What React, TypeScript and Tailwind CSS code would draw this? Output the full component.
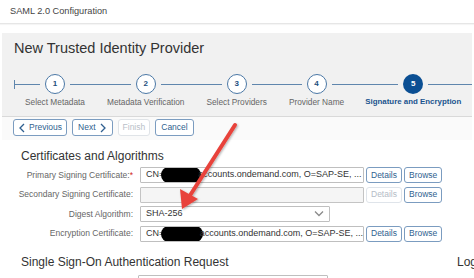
import React from "react";

type Step = { n: number; label: string; active?: boolean };

const steps: Step[] = [
  { n: 1, label: "Select Metadata" },
  { n: 2, label: "Metadata Verification" },
  { n: 3, label: "Select Providers" },
  { n: 4, label: "Provider Name" },
  { n: 5, label: "Signature and Encryption", active: true },
];

function Chevron({ dir }: { dir: "left" | "right" | "down" }) {
  const d =
    dir === "left" ? "M6 1 L2 5 L6 9" : dir === "right" ? "M2 1 L6 5 L2 9" : "M1 2.5 L5 6.5 L9 2.5";
  return (
    <svg width={dir === "down" ? 10 : 8} height="10" viewBox={dir === "down" ? "0 0 10 10" : "0 0 8 10"} className="shrink-0">
      <path d={d} fill="none" stroke="currentColor" strokeWidth="1.3" />
    </svg>
  );
}

function SmallButton({ children, disabled }: { children: React.ReactNode; disabled?: boolean }) {
  return (
    <div
      className={
        disabled
          ? "flex h-[16px] items-center justify-center rounded-[3px] border border-[#dfe4ea] bg-white px-[4px] text-[8.5px] text-[#b4bcc6]"
          : "flex h-[16px] items-center justify-center rounded-[3px] border border-[#7b9cc0] bg-white px-[4px] text-[8.5px] text-[#2f5f8f]"
      }
    >
      {children}
    </div>
  );
}

function Redacted({ w }: { w: number }) {
  return (
    <span
      className="mx-[-3px] inline-block h-[16px] rounded-full bg-black align-middle"
      style={{ width: `${w}px` }}
    />
  );
}

function CertInput({ redactW, empty }: { redactW?: number; empty?: boolean }) {
  return (
    <div
      className={
        empty
          ? "h-full w-[224px] rounded-[1px] border border-[#c4c4c4] bg-[#f5f5f5]"
          : "flex h-full w-[224px] items-center overflow-hidden whitespace-nowrap rounded-[1px] border border-[#bfbfbf] bg-white pl-[5px] text-[9px] text-[#333]"
      }
    >
      {!empty && (
        <>
          <span>CN=</span>
          <Redacted w={redactW ?? 40} />
          <span>accounts.ondemand.com, O=SAP-SE, ...</span>
        </>
      )}
    </div>
  );
}

export default function App() {
  return (
    <div
      className="relative h-[278px] w-[474px] overflow-hidden bg-white text-[#333]"
      style={{ fontFamily: '"Liberation Sans", Arial, sans-serif' }}
    >
      {/* shell header */}
      <div className="flex h-[24px] items-center border-b border-[#e6e6e6] pl-[10px] text-[9.2px] text-[#444] shadow-[0_1px_1px_rgba(0,0,0,0.04)]">
        SAML 2.0 Configuration
      </div>

      {/* wizard header */}
      <div className="mx-[2px] mt-[9px] bg-[#f1f1f1]">
        <div className="h-[35px] pl-[12px] pt-[7px] text-[14.5px] leading-[16px] text-[#333]">
          New Trusted Identity Provider
        </div>

        <div className="flex h-[49px] border-b border-[#d9d9d9] pl-[12px] pt-[6px]">
          {steps.map((s, i) => (
            <div key={s.n} className="flex flex-col items-stretch">
              <div className="flex h-[20px] items-center">
                <div className="relative mr-[5px] h-px flex-1 bg-[#5f86ad]">
                  {i === 0 && <div className="absolute left-0 top-[-4px] h-[9px] w-px bg-[#5f86ad]" />}
                </div>
                <div
                  className={
                    s.active
                      ? "flex h-[20px] w-[20px] items-center justify-center rounded-full bg-[#0b4f93] text-[8px] font-bold text-white"
                      : "flex h-[20px] w-[20px] items-center justify-center rounded-full border border-[#4b78a6] bg-white text-[8px] font-bold text-[#234f7e]"
                  }
                >
                  {s.n}
                </div>
                <div className="ml-[5px] h-px flex-1 bg-[#5f86ad]" />
              </div>
              <div
                className={
                  s.active
                    ? "mt-[3px] whitespace-nowrap px-[10px] text-center text-[7.9px] font-bold leading-[10px] text-[#1a548e]"
                    : "mt-[3px] whitespace-nowrap px-[11px] text-center text-[8.3px] leading-[10px] text-[#666]"
                }
              >
                {s.label}
              </div>
            </div>
          ))}
          <div className="mt-[10px] h-px flex-1 bg-[#5f86ad]" />
        </div>

        <div className="flex h-[23px] gap-[5px] bg-[#fafafa] pl-[11px] pt-[2px]">
          <div className="flex h-[17px] items-center gap-[3px] rounded-[3px] border border-[#7b9cc0] bg-white px-[4px] text-[8.5px] text-[#2f5f8f]">
            <Chevron dir="left" />
            Previous
          </div>
          <div className="flex h-[17px] items-center gap-[3px] rounded-[3px] border border-[#7b9cc0] bg-white px-[5px] text-[8.5px] text-[#2f5f8f]">
            Next
            <Chevron dir="right" />
          </div>
          <div className="flex h-[17px] items-center rounded-[3px] border border-[#e0e4e8] bg-white px-[4px] text-[8.5px] text-[#b9c0c8]">
            Finish
          </div>
          <div className="flex h-[17px] items-center rounded-[3px] border border-[#7b9cc0] bg-white px-[5px] text-[8.5px] text-[#2f5f8f]">
            Cancel
          </div>
        </div>
      </div>

      {/* form */}
      <div className="mt-[9px] pl-[21px] text-[12px] leading-[14px] text-[#333]">Certificates and Algorithms</div>

      <div className="mt-[4px] grid grid-cols-[133px_auto] gap-x-[7px] gap-y-[3.5px]">
        <div className="flex h-[16px] items-center justify-end text-[8.5px] text-[#666]">
          Primary Signing Certificate:<span className="text-[#d0271d]">*</span>
        </div>
        <div className="flex h-[16px] gap-[2px]">
          <CertInput redactW={40} />
          <SmallButton>Details</SmallButton>
          <SmallButton>Browse</SmallButton>
        </div>

        <div className="flex h-[16px] items-center justify-end text-[8.5px] text-[#666]">
          Secondary Signing Certificate:
        </div>
        <div className="flex h-[16px] gap-[2px]">
          <CertInput empty />
          <SmallButton disabled>Details</SmallButton>
          <SmallButton>Browse</SmallButton>
        </div>

        <div className="flex h-[16px] items-center justify-end text-[8.5px] text-[#666]">Digest Algorithm:</div>
        <div className="flex h-[16px]">
          <div className="flex h-full w-[190px] items-center justify-between rounded-[1px] border border-[#bfbfbf] bg-white pl-[5px] pr-[5px] text-[9px] text-[#333]">
            SHA-256
            <span className="text-[#8a8a8a]">
              <Chevron dir="down" />
            </span>
          </div>
        </div>

        <div className="flex h-[16px] items-center justify-end text-[8.5px] text-[#666]">Encryption Certificate:</div>
        <div className="flex h-[16px] gap-[2px]">
          <CertInput redactW={50} />
          <SmallButton>Details</SmallButton>
          <SmallButton>Browse</SmallButton>
        </div>
      </div>

      <div className="mt-[13px] flex whitespace-nowrap text-[12px] leading-[14px] text-[#333]">
        <div className="w-[457px] shrink-0 pl-[21px]">Single Sign-On Authentication Request</div>
        <div className="shrink-0">Logout Settings</div>
      </div>
      <div className="ml-[138px] mt-[6px] h-[16px] w-[190px] rounded-[1px] border border-[#bfbfbf] bg-white" />

      {/* annotation arrow */}
      <svg className="pointer-events-none absolute inset-0" width="474" height="278" viewBox="0 0 474 278">
        <defs>
          <filter id="sh" x="-20%" y="-20%" width="140%" height="140%">
            <feDropShadow dx="1" dy="1" stdDeviation="1.2" floodColor="#000" floodOpacity="0.3" />
          </filter>
        </defs>
        <g filter="url(#sh)">
          <line x1="235" y1="125" x2="189" y2="197" stroke="#e8433b" strokeWidth="4" strokeLinecap="round" />
          <polygon points="182,209 180,189 198,199" fill="#e8433b" />
        </g>
      </svg>
    </div>
  );
}
